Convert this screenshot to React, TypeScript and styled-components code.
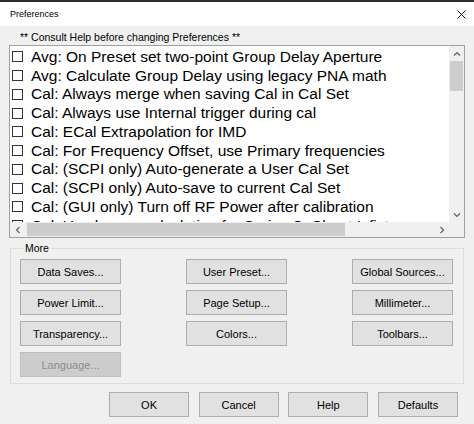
import React from "react";
import styled, { createGlobalStyle } from "styled-components";

const GlobalStyle = createGlobalStyle`
	html, body {
		margin: 0;
		padding: 0;
		background: #f0f0f0;
	}
	* {
		box-sizing: border-box;
	}
`;

const preferences = [
	"Avg: On Preset set two-point Group Delay Aperture",
	"Avg: Calculate Group Delay using legacy PNA math",
	"Cal:  Always merge when saving Cal in Cal Set",
	"Cal: Always use Internal trigger during cal",
	"Cal: ECal Extrapolation for IMD",
	"Cal: For Frequency Offset, use Primary frequencies",
	"Cal: (SCPI only) Auto-generate a User Cal Set",
	"Cal: (SCPI only) Auto-save to current Cal Set",
	"Cal: (GUI only) Turn off RF Power after calibration",
	"Cal: Use legacy calculation for Series C, Shunt L fixture",
];

const moreButtons: { label: string; disabled?: boolean }[] = [
	{ label: "Data Saves..." },
	{ label: "User Preset..." },
	{ label: "Global Sources..." },
	{ label: "Power Limit..." },
	{ label: "Page Setup..." },
	{ label: "Millimeter..." },
	{ label: "Transparency..." },
	{ label: "Colors..." },
	{ label: "Toolbars..." },
	{ label: "Language...", disabled: true },
];

const Chevron = ({ dir }: { dir: "up" | "down" | "left" | "right" }) => {
	const rot = { up: 0, right: 90, down: 180, left: 270 }[dir];
	return (
		<svg width="8" height="8" viewBox="0 0 8 8" style={{ transform: `rotate(${rot}deg)` }}>
			<path d="M1 5.5 L4 2.5 L7 5.5" fill="none" stroke="#606060" strokeWidth="1.2" />
		</svg>
	);
};

function App() {
	return (
		<>
			<GlobalStyle />
			<Window>
				<TopStrip />
				<TitleBar>
					<Title>Preferences</Title>
					<CloseIcon width="9" height="9" viewBox="0 0 9 9">
						<path d="M0.5 0.5 L8.5 8.5 M8.5 0.5 L0.5 8.5" stroke="#111" strokeWidth="1" />
					</CloseIcon>
				</TitleBar>
				<Body>
					<Heading>** Consult Help before changing Preferences **</Heading>
					<ListBox>
						<Items>
							{preferences.map((p) => (
								<Row key={p}>
									<Check />
									<RowText>{p}</RowText>
								</Row>
							))}
						</Items>
						<VScroll>
							<ArrowButton>
								<Chevron dir="up" />
							</ArrowButton>
							<VTrack>
								<VThumb />
							</VTrack>
							<ArrowButton>
								<Chevron dir="down" />
							</ArrowButton>
						</VScroll>
						<HScroll>
							<ArrowButton>
								<Chevron dir="left" />
							</ArrowButton>
							<HTrack>
								<HThumb />
							</HTrack>
							<ArrowButton>
								<Chevron dir="right" />
							</ArrowButton>
						</HScroll>
						<Corner />
					</ListBox>
					<Group>
						<Legend>More</Legend>
						<ButtonGrid>
							{moreButtons.map((b) => (
								<DialogButton key={b.label} disabled={b.disabled}>
									{b.label}
								</DialogButton>
							))}
						</ButtonGrid>
					</Group>
					<Footer>
						<DialogButton $wide={false}>OK</DialogButton>
						<DialogButton $wide={false}>Cancel</DialogButton>
						<DialogButton $wide={false}>Help</DialogButton>
						<DialogButton $wide={false}>Defaults</DialogButton>
					</Footer>
				</Body>
			</Window>
		</>
	);
}

const Window = styled.div`
	width: 474px;
	height: 424px;
	background: #f0f0f0;
	display: flex;
	flex-direction: column;
	overflow: hidden;
	font-family: "Liberation Sans", Arial, sans-serif;
	color: #000;
`;

const TopStrip = styled.div`
	height: 2px;
	background: #2b2b2b;
`;

const TitleBar = styled.div`
	height: 24px;
	background: #fff;
	display: flex;
	align-items: center;
	justify-content: space-between;
	padding: 0 8px 0 10px;
`;

const Title = styled.span`
	font-size: 9px;
	color: #000;
`;

const CloseIcon = styled.svg`
	display: block;
`;

const Body = styled.div`
	flex: 1;
	display: flex;
	flex-direction: column;
	padding: 0 9px;
`;

const Heading = styled.div`
	height: 19px;
	padding: 5px 0 0 11px;
	font-size: 10.5px;
	line-height: 12px;
	white-space: nowrap;
`;

const ListBox = styled.div`
	height: 193px;
	border: 1px solid #a0a0a0;
	background: #fff;
	display: grid;
	grid-template-columns: 1fr 15px;
	grid-template-rows: 1fr 15px;
	overflow: hidden;
`;

const Items = styled.div`
	padding: 1.5px 0 0 2px;
	overflow: hidden;
`;

const Row = styled.div`
	height: 18.75px;
	display: flex;
	align-items: center;
	gap: 8px;
	white-space: nowrap;
`;

const Check = styled.span`
	flex: none;
	width: 11px;
	height: 11px;
	border: 1px solid #333;
	background: #fff;
`;

const RowText = styled.span`
	font-size: 15.5px;
	line-height: 18px;
`;

const VScroll = styled.div`
	background: #f0f0f0;
	display: flex;
	flex-direction: column;
`;

const HScroll = styled.div`
	background: #f0f0f0;
	display: flex;
`;

const ArrowButton = styled.div`
	flex: none;
	width: 15px;
	height: 15px;
	display: flex;
	align-items: center;
	justify-content: center;
`;

const VTrack = styled.div`
	flex: 1;
	padding: 0 1px;
`;

const VThumb = styled.div`
	height: 30px;
	background: #cdcdcd;
`;

const HTrack = styled.div`
	flex: 1;
	padding: 1px 0;
`;

const HThumb = styled.div`
	width: 318px;
	height: 100%;
	margin-left: 2px;
	background: #cdcdcd;
`;

const Corner = styled.div`
	background: #f0f0f0;
`;

const Group = styled.fieldset`
	margin: 4px 1px 0 1px;
	padding: 5px 9px 6px 9px;
	border: 1px solid #dcdcdc;
	min-width: 0;
`;

const Legend = styled.legend`
	padding: 0 2px;
	margin-left: 3px;
	font-size: 10.5px;
	line-height: 12px;
	color: #000;
`;

const ButtonGrid = styled.div`
	display: grid;
	grid-template-columns: repeat(3, 101px);
	grid-auto-rows: 25px;
	column-gap: 65px;
	row-gap: 6px;
`;

const DialogButton = styled.button<{ $wide?: boolean }>`
	width: ${({ $wide }) => ($wide === false ? "80px" : "101px")};
	height: 25px;
	margin: 0;
	padding: 0;
	background: #e1e1e1;
	border: 1px solid #adadad;
	font-family: "Liberation Sans", Arial, sans-serif;
	font-size: 11px;
	color: #000;

	&:disabled {
		background: #cccccc;
		border-color: #bfbfbf;
		color: #8d8d8d;
	}
`;

const Footer = styled.div`
	display: flex;
	justify-content: flex-end;
	gap: 9.67px;
	padding: 8px 7px 0 0;
`;

export default App;
